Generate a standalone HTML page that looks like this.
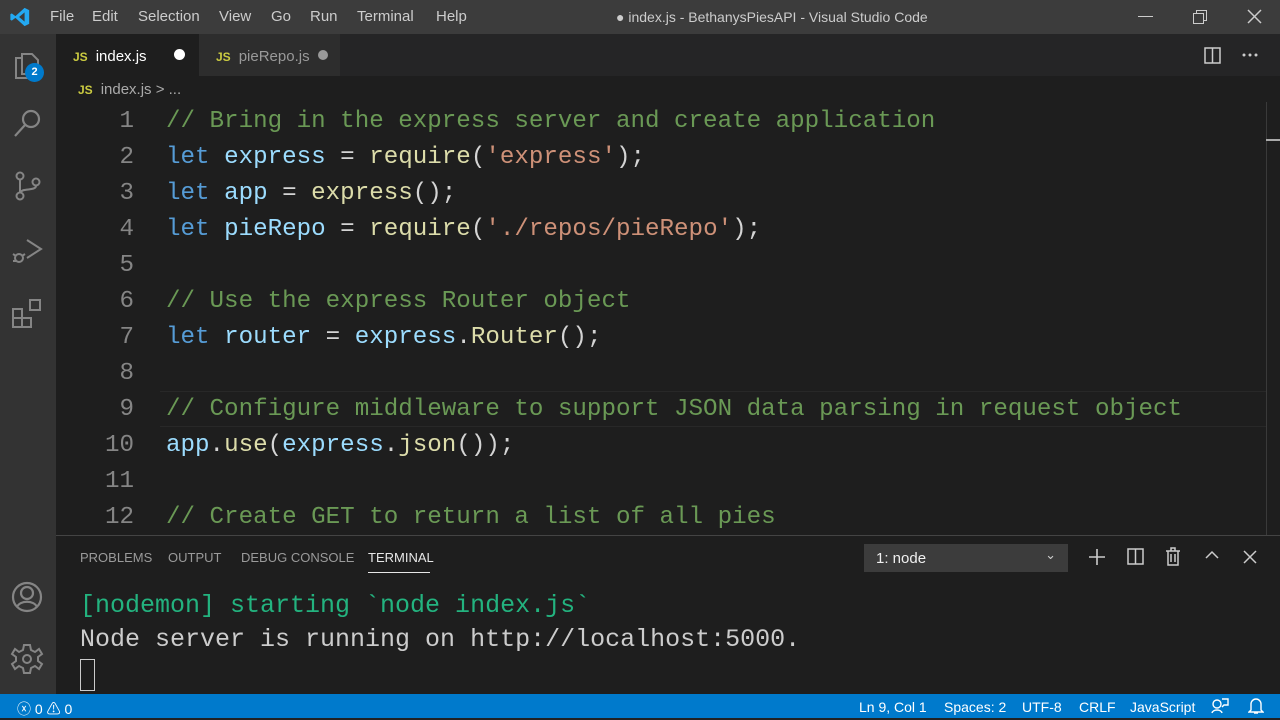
<!DOCTYPE html>
<html><head><meta charset="utf-8"><style>
*{margin:0;padding:0;box-sizing:border-box}
body{width:1280px;height:720px;overflow:hidden;background:#1e1e1e;font-family:"Liberation Sans",sans-serif;position:relative}
.abs{position:absolute}
#title{left:0;top:0;width:1280px;height:34px;background:#3c3c3c;color:#ccc;font-size:15px}
#title span{position:absolute;top:8px}
#act{left:0;top:34px;width:56px;height:660px;background:#333}
#tabs{left:56px;top:34px;width:1224px;height:42px;background:#252526}
.tab{position:absolute;top:0;height:42px;font-size:15px;padding-top:13px}
.js{color:#cbcb41;font-weight:bold;font-size:12px;margin-right:8px}
.code{font-family:"Liberation Mono",monospace;font-size:24.2px;line-height:36px;white-space:pre;color:#d4d4d4}
.c{color:#6a9955}.k{color:#569cd6}.v{color:#9cdcfe}.f{color:#dcdcaa}.s{color:#ce9178}
.ln{color:#858585;text-align:right;width:80px}
#panel{left:56px;top:535px;width:1224px;height:159px;background:#1e1e1e;border-top:1px solid #444}
.ph{position:absolute;top:14px;font-size:13px;color:#9a9a9a}
.term{font-family:"Liberation Mono",monospace;font-size:25px;line-height:34px;white-space:pre;color:#ccc}
#status{left:0;top:694px;width:1280px;height:24px;background:#007acc;color:#fff;font-size:14px}
#status span{position:absolute;top:5px}
svg{position:absolute}
</style></head><body>
<div id="title" class="abs">
<svg style="left:9px;top:6px" width="22" height="22" viewBox="0 0 24 24"><path d="M17 2 L22 4.5 V19.5 L17 22 L7 13 L3 16 L1.5 15 V9 L3 8 L7 11 Z M17 7 L11 12 L17 17 Z" fill="#23a9f2"/></svg>
<span style="left:50px">File</span><span style="left:92px">Edit</span><span style="left:138px">Selection</span><span style="left:219px">View</span><span style="left:271px">Go</span><span style="left:310px">Run</span><span style="left:357px">Terminal</span><span style="left:436px">Help</span>
<span style="left:616px;font-size:14px;top:9px">● index.js - BethanysPiesAPI - Visual Studio Code</span>
<div class="abs" style="left:1138px;top:16px;width:15px;height:1px;background:#ccc"></div>
<svg style="left:1192px;top:9px" width="16" height="16"><rect x="1.5" y="4.5" width="10" height="10" fill="none" stroke="#ccc"/><path d="M4.5 4.5V1.5H14.5V11.5H11.5" fill="none" stroke="#ccc"/></svg>
<svg style="left:1246px;top:8px" width="17" height="17"><path d="M2 2L15 15M15 2L2 15" stroke="#ccc" stroke-width="1.5"/></svg>
</div>
<div id="act" class="abs">
<svg style="left:12px;top:14px" width="32" height="32" viewBox="0 0 32 32" fill="none" stroke="#858585" stroke-width="2"><path d="M10 6H20L26 12V26H10Z"/><path d="M10 10H4V30H20V26"/></svg>
<div class="abs" style="left:25px;top:29px;width:19px;height:19px;border-radius:50%;background:#007acc;color:#fff;font-size:11px;text-align:center;line-height:19px;font-weight:bold">2</div>
<svg style="left:12px;top:73px" width="32" height="32" fill="none" stroke="#858585" stroke-width="2.2"><circle cx="19" cy="12" r="8"/><path d="M13 18L3 29"/></svg>
<svg style="left:14px;top:136px" width="28" height="32" fill="none" stroke="#858585" stroke-width="2"><circle cx="6" cy="6" r="3.5"/><circle cx="6" cy="26" r="3.5"/><circle cx="22" cy="12" r="3.5"/><path d="M6 10V22M22 16C22 21 8 18 7 22"/></svg>
<svg style="left:10px;top:200px" width="34" height="34" fill="none" stroke="#858585" stroke-width="2"><path d="M17 6L31 15L17 24"/><circle cx="9" cy="24" r="4"/><path d="M3 20L6 22M3 27H6M15 20L12 22"/></svg>
<svg style="left:11px;top:263px" width="34" height="34" fill="none" stroke="#858585" stroke-width="2"><rect x="2" y="12" width="9" height="9"/><rect x="2" y="21" width="9" height="9"/><rect x="11" y="21" width="9" height="9"/><rect x="19" y="3" width="10" height="10"/></svg>
<svg style="left:10px;top:546px" width="34" height="34" fill="none" stroke="#858585" stroke-width="2.2"><circle cx="17" cy="17" r="14"/><circle cx="17" cy="13" r="6"/><path d="M7 27C10 20 24 20 27 27"/></svg>
<svg style="left:10px;top:608px" width="34" height="34" viewBox="0 0 34 34" fill="none" stroke="#858585" stroke-width="2"><circle cx="17" cy="17" r="4"/><path d="M14 3H20L21 8L25 10L29 7L32 12L28 15V19L32 22L29 27L25 24L21 26L20 31H14L13 26L9 24L5 27L2 22L6 19V15L2 12L5 7L9 10L13 8Z"/></svg>
</div>
<div id="tabs" class="abs">
<div class="tab" style="left:0;width:143px;background:#1e1e1e;color:#fff;padding-left:17px;padding-top:14px"><span class="js">JS</span>index.js<span style="position:absolute;left:118px;top:15px;width:11px;height:11px;border-radius:50%;background:#fff"></span></div>
<div class="tab" style="left:143px;width:141px;background:#2d2d2d;color:#999;padding-left:17px;padding-top:14px"><span class="js">JS</span>pieRepo.js<span style="position:absolute;left:119px;top:16px;width:10px;height:10px;border-radius:50%;background:#999"></span></div>
<svg style="left:1148px;top:13px" width="17" height="17" fill="none" stroke="#ccc" stroke-width="1.5"><rect x="1" y="1" width="15" height="15"/><path d="M8.5 1V16"/></svg>
<svg style="left:1186px;top:19px" width="16" height="4" fill="#ccc"><circle cx="2" cy="2" r="1.5"/><circle cx="8" cy="2" r="1.5"/><circle cx="14" cy="2" r="1.5"/></svg>
</div>
<div class="abs" style="left:78px;top:81px;font-size:15px;color:#aaa"><span class="js">JS</span>index.js &gt; ...</div>
<div class="abs code ln" style="left:54px;top:104px">1
2
3
4
5
6
7
8
9
10
11
12</div>
<div class="abs" style="left:160px;top:391px;width:1106px;height:36px;border-top:1px solid #282828;border-bottom:1px solid #282828"></div>
<div class="abs code" style="left:166px;top:104px"><span class="c">// Bring in the express server and create application</span>
<span class="k">let</span> <span class="v">express</span> = <span class="f">require</span>(<span class="s">'express'</span>);
<span class="k">let</span> <span class="v">app</span> = <span class="f">express</span>();
<span class="k">let</span> <span class="v">pieRepo</span> = <span class="f">require</span>(<span class="s">'./repos/pieRepo'</span>);

<span class="c">// Use the express Router object</span>
<span class="k">let</span> <span class="v">router</span> = <span class="v">express</span>.<span class="f">Router</span>();

<span class="c">// Configure middleware to support JSON data parsing in request object</span>
<span class="v">app</span>.<span class="f">use</span>(<span class="v">express</span>.<span class="f">json</span>());

<span class="c">// Create GET to return a list of all pies</span></div>
<div class="abs" style="left:1266px;top:102px;width:1px;height:433px;background:#3a3a3a"></div>
<div class="abs" style="left:1266px;top:139px;width:14px;height:2px;background:#aaa"></div>
<div id="panel" class="abs">
<span class="ph" style="left:24px">PROBLEMS</span><span class="ph" style="left:112px">OUTPUT</span><span class="ph" style="left:185px">DEBUG CONSOLE</span><span class="ph" style="left:312px;color:#e7e7e7">TERMINAL</span>
<div class="abs" style="left:312px;top:36px;width:62px;height:1px;background:#e7e7e7"></div>
<div class="abs" style="left:808px;top:8px;width:204px;height:28px;background:#3c3c3c;color:#f0f0f0;font-size:15px;padding:6px 12px">1: node<span style="position:absolute;right:12px;top:3px;color:#ccc;font-size:13px">&#8964;</span></div>
<svg style="left:1032px;top:12px" width="18" height="18" stroke="#ccc" stroke-width="1.6"><path d="M9 1V17M1 9H17"/></svg>
<svg style="left:1071px;top:12px" width="17" height="17" fill="none" stroke="#ccc" stroke-width="1.5"><rect x="1" y="1" width="15" height="15"/><path d="M8.5 1V16"/></svg>
<svg style="left:1109px;top:11px" width="16" height="19" fill="none" stroke="#ccc" stroke-width="1.5"><path d="M1 4H15M6 4V1H10V4M3 4V18H13V4M6 7V15M10 7V15"/></svg>
<svg style="left:1149px;top:14px" width="14" height="10" fill="none" stroke="#ccc" stroke-width="1.5"><path d="M1 8L7 2L13 8"/></svg>
<svg style="left:1187px;top:14px" width="14" height="14" stroke="#ccc" stroke-width="1.5"><path d="M1 1L13 13M13 1L1 13"/></svg>
<div class="abs term" style="left:24px;top:53px"><span style="color:#23b37f">[nodemon] starting `node index.js`</span>
Node server is running on http://localhost:5000.</div>
<div class="abs" style="left:24px;top:123px;width:15px;height:32px;border:1px solid #ccc"></div>
</div>
<div id="status" class="abs">
<span style="left:17px">ⓧ 0 ⚠ 0</span>
<span style="left:859px">Ln 9, Col 1</span><span style="left:944px">Spaces: 2</span><span style="left:1022px">UTF-8</span><span style="left:1079px">CRLF</span><span style="left:1130px">JavaScript</span>
<svg style="left:1211px;top:4px" width="18" height="16" fill="none" stroke="#fff" stroke-width="1.4"><circle cx="6" cy="6" r="4"/><path d="M1 15C2 11 10 11 11 15M11 1H17V7H13L11 9"/></svg>
<svg style="left:1248px;top:3px" width="16" height="18" fill="none" stroke="#fff" stroke-width="1.4"><path d="M3 13V7A5 5 0 0 1 13 7V13L15 15H1Z M6 16H10"/></svg>
</div>
<div class="abs" style="left:0;top:718px;width:1280px;height:2px;background:#222"></div>
</body></html>
